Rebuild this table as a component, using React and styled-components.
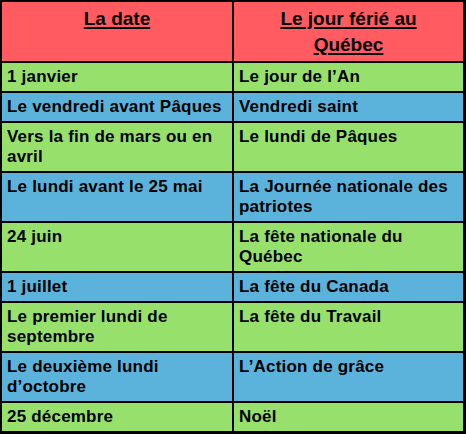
import React from "react";
import styled, { createGlobalStyle } from "styled-components";

const Global = createGlobalStyle`
  html, body { margin: 0; padding: 0; background: #ffffff; }
  body { font-family: "Liberation Sans", Arial, Helvetica, sans-serif; }
`;

const Table = styled.div`
  display: grid;
  grid-template-columns: 230px 229px;
  gap: 2px;
  padding: 2px 3px 3px 2px;
  width: 466px;
  box-sizing: border-box;
  background: #000000;
`;

const HeadCell = styled.div`
  background: #ff5b60;
  color: #000;
  font-size: 19px;
  font-weight: 700;
  line-height: 26px;
  text-align: center;
  padding: 4px 4px 3px;
  text-decoration: underline;
  text-decoration-thickness: 1.5px;
  text-underline-offset: 2px;
`;

const Cell = styled.div`
  background: ${(p) => (p.$tone === "blue" ? "#5bb3dc" : "#98e06c")};
  color: #000;
  font-size: 17px;
  font-weight: 700;
  letter-spacing: 0.2px;
  line-height: 20px;
  padding: 4px 4px 4px 5px;
`;

const rows = [
  ["1 janvier", "Le jour de l’An"],
  ["Le vendredi avant Pâques", "Vendredi saint"],
  ["Vers la fin de mars ou en avril", "Le lundi de Pâques"],
  ["Le lundi avant le 25 mai", "La Journée nationale des patriotes"],
  ["24 juin", "La fête nationale du Québec"],
  ["1 juillet", "La fête du Canada"],
  ["Le premier lundi de septembre", "La fête du Travail"],
  ["Le deuxième lundi d’octobre", "L’Action de grâce"],
  ["25 décembre", "Noël"],
];

export default function App() {
  return (
    <>
      <Global />
      <Table>
        <HeadCell>La date</HeadCell>
        <HeadCell>
          Le jour férié au
          <br />
          Québec
        </HeadCell>
        {rows.map(([a, b], i) => {
          const tone = i % 2 === 0 ? "green" : "blue";
          return (
            <React.Fragment key={i}>
              <Cell $tone={tone}>{a}</Cell>
              <Cell $tone={tone}>{b}</Cell>
            </React.Fragment>
          );
        })}
      </Table>
    </>
  );
}
